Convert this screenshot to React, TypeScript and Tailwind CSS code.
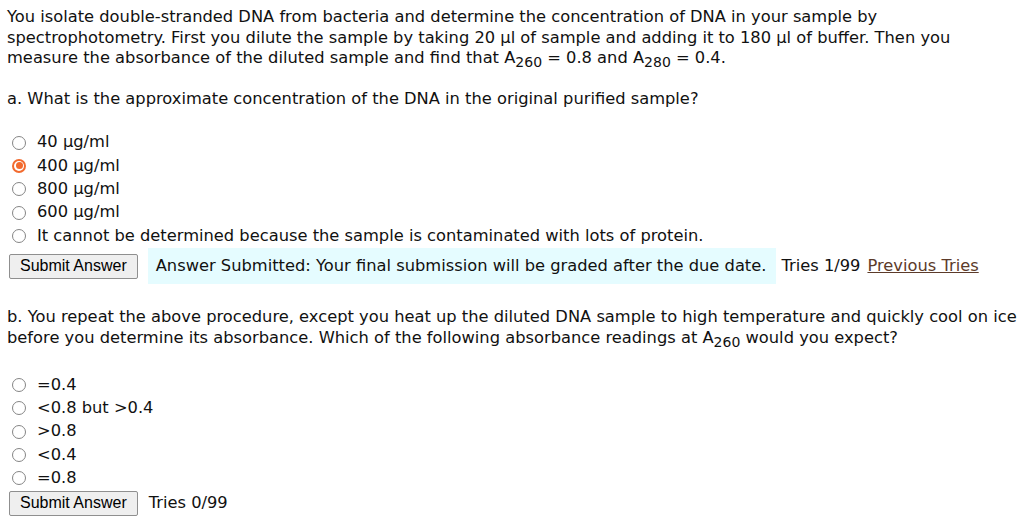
import React from "react";

const font = { fontFamily: '"DejaVu Sans", Verdana, sans-serif' };

function Sub({ children }: { children: React.ReactNode }) {
  return <span className="relative top-[4px] text-[14px] leading-none">{children}</span>;
}

function Radio({ checked }: { checked?: boolean }) {
  if (checked) {
    return (
      <span className="inline-flex w-[14px] h-[14px] rounded-full bg-[#f26a2e] items-center justify-center shrink-0">
        <span className="w-[10px] h-[10px] rounded-full bg-white flex items-center justify-center">
          <span className="w-[7px] h-[7px] rounded-full bg-[#f26a2e]" />
        </span>
      </span>
    );
  }
  return <span className="inline-block w-[14px] h-[14px] rounded-full border border-[#858585] bg-white shrink-0" />;
}

function Option({ label, checked }: { label: React.ReactNode; checked?: boolean }) {
  return (
    <div className="flex items-center h-[23.3px] whitespace-nowrap">
      <span className="w-[37px] pl-[12px] flex items-center">
        <Radio checked={checked} />
      </span>
      <span>{label}</span>
    </div>
  );
}

function SubmitButton() {
  return (
    <button
      className="h-[25px] px-[10px] border border-[#8f8f8f] rounded-[2px] bg-[#efefef] text-[16px] text-black leading-none"
      style={{ fontFamily: '"Liberation Sans", Arial, sans-serif' }}
    >
      Submit Answer
    </button>
  );
}

export default function App() {
  return (
    <div className="w-[1024px] h-[525px] bg-white text-[#111] text-[16.3px] leading-[20.5px] overflow-hidden" style={font}>
      <div className="pl-[7px] pt-[7px] whitespace-nowrap">
        <div>You isolate double-stranded DNA from bacteria and determine the concentration of DNA in your sample by</div>
        <div>spectrophotometry. First you dilute the sample by taking 20 µl of sample and adding it to 180 µl of buffer. Then you</div>
        <div>
          measure the absorbance of the diluted sample and find that A<Sub>260</Sub> = 0.8 and A<Sub>280</Sub> = 0.4.
        </div>
        <div className="mt-[20px]">a. What is the approximate concentration of the DNA in the original purified sample?</div>
      </div>
      <div className="mt-[22px]">
        <Option label="40 µg/ml" />
        <Option label="400 µg/ml" checked />
        <Option label="800 µg/ml" />
        <Option label="600 µg/ml" />
        <Option label="It cannot be determined because the sample is contaminated with lots of protein." />
      </div>
      <div className="flex items-center pl-[9px] mt-[1px] whitespace-nowrap">
        <SubmitButton />
        <div className="ml-[10px] bg-[#e5fcff] h-[36px] flex items-center pl-[8px] pr-[10px]">
          Answer Submitted: Your final submission will be graded after the due date.
        </div>
        <span className="ml-[5px]">Tries 1/99</span>
        <a href="#" className="ml-[7px] text-[#5c3b2a] underline">Previous Tries</a>
      </div>
      <div className="pl-[7px] mt-[23px] whitespace-nowrap">
        <div>b. You repeat the above procedure, except you heat up the diluted DNA sample to high temperature and quickly cool on ice</div>
        <div>
          before you determine its absorbance. Which of the following absorbance readings at A<Sub>260</Sub> would you expect?
        </div>
      </div>
      <div className="mt-[25px]">
        <Option label="=0.4" />
        <Option label="<0.8 but >0.4" />
        <Option label=">0.8" />
        <Option label="<0.4" />
        <Option label="=0.8" />
      </div>
      <div className="flex items-center pl-[9px] mt-[1px] whitespace-nowrap">
        <SubmitButton />
        <span className="ml-[11px]">Tries 0/99</span>
      </div>
    </div>
  );
}
